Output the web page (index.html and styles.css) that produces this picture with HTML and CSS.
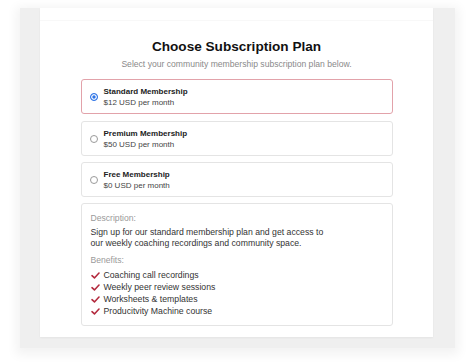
FILE: index.html
```html
<!DOCTYPE html>
<html>
<head>
<meta charset="utf-8">
<link rel="stylesheet" href="styles.css">
</head>
<body>
<div class="stage">
  <div class="frame">
    <div class="card">
      <div class="topbar"></div>
      <div class="content">
        <h1 class="title">Choose Subscription Plan</h1>
        <p class="subtitle">Select your community membership subscription plan below.</p>
        <div class="plans">
          <div class="plan selected">
            <span class="radio on"></span>
            <div class="plan-text">
              <div class="plan-name">Standard Membership</div>
              <div class="plan-price">$12 USD per month</div>
            </div>
          </div>
          <div class="plan">
            <span class="radio"></span>
            <div class="plan-text">
              <div class="plan-name">Premium Membership</div>
              <div class="plan-price">$50 USD per month</div>
            </div>
          </div>
          <div class="plan">
            <span class="radio"></span>
            <div class="plan-text">
              <div class="plan-name">Free Membership</div>
              <div class="plan-price">$0 USD per month</div>
            </div>
          </div>
          <div class="details">
            <div class="label">Description:</div>
            <p class="desc">Sign up for our standard membership plan and get access to<br>our weekly coaching recordings and community space.</p>
            <div class="label benefits-label">Benefits:</div>
            <ul class="benefits">
              <li><svg class="check" viewBox="0 0 10 8"><path d="M1 4.2 L3.8 6.8 L9 1.2"/></svg>Coaching call recordings</li>
              <li><svg class="check" viewBox="0 0 10 8"><path d="M1 4.2 L3.8 6.8 L9 1.2"/></svg>Weekly peer review sessions</li>
              <li><svg class="check" viewBox="0 0 10 8"><path d="M1 4.2 L3.8 6.8 L9 1.2"/></svg>Worksheets &amp; templates</li>
              <li><svg class="check" viewBox="0 0 10 8"><path d="M1 4.2 L3.8 6.8 L9 1.2"/></svg>Producitvity Machine course</li>
            </ul>
          </div>
        </div>
      </div>
    </div>
  </div>
</div>
</body>
</html>
```

FILE: styles.css
```css
html, body {
  margin: 0;
  padding: 0;
  background: #ffffff;
}
body {
  font-family: "Liberation Sans", Arial, sans-serif;
  width: 474px;
  height: 364px;
  overflow: hidden;
}
.stage {
  padding: 8px 19px 0 20px;
  height: 356px;
}
.frame {
  width: 435px;
  box-sizing: border-box;
  padding: 0 22px 11px 20px;
  background: #efefef;
  box-shadow: 0 3px 10px 4px #f3f3f3;
}
.card {
  width: 393px;
  height: 329px;
  background: #ffffff;
  box-shadow: 0 1px 2px rgba(0, 0, 0, 0.05);
  display: flex;
  flex-direction: column;
}
.topbar {
  height: 12px;
  border-bottom: 1px solid #f8f8f8;
  flex: none;
}
.content {
  display: flex;
  flex-direction: column;
  align-items: center;
}
.title {
  margin: 17px 0 0;
  font-size: 13.6px;
  line-height: 18px;
  font-weight: bold;
  color: #111111;
}
.subtitle {
  margin: 3px 0 0;
  font-size: 8.6px;
  line-height: 11px;
  color: #8a8a8a;
}
.plans {
  width: 312px;
  margin-top: 9px;
  display: flex;
  flex-direction: column;
  gap: 6px;
}
.plan {
  box-sizing: border-box;
  height: 35px;
  border: 1px solid #e4e4e4;
  border-radius: 3px;
  display: flex;
  align-items: center;
  padding: 0 8px 0 8px;
  gap: 6px;
}
.plan.selected {
  border-color: #e2a2aa;
  margin-bottom: 1px;
}
.radio {
  box-sizing: border-box;
  width: 8px;
  height: 8px;
  border-radius: 50%;
  border: 1px solid #9a9a9a;
  background: #ffffff;
  flex: none;
  margin-top: 1px;
}
.radio.on {
  border: 1px solid #2f74e6;
  background: #2f74e6;
  box-shadow: inset 0 0 0 1.3px #ffffff;
}
.plan-text {
  display: flex;
  flex-direction: column;
}
.plan-name {
  font-size: 8px;
  line-height: 11px;
  font-weight: bold;
  color: #222222;
}
.plan-price {
  font-size: 8px;
  line-height: 11px;
  color: #444444;
}
.details {
  box-sizing: border-box;
  border: 1px solid #e4e4e4;
  border-radius: 3px;
  padding: 8px 9px 7px;
  height: 123px;
}
.label {
  font-size: 8.6px;
  line-height: 12px;
  color: #9a9a9a;
}
.desc {
  margin: 3px 0 0;
  font-size: 8.7px;
  line-height: 10.5px;
  color: #333333;
}
.benefits-label {
  margin-top: 6px;
}
.benefits {
  list-style: none;
  margin: 3px 0 0;
  padding: 0;
}
.benefits li {
  display: flex;
  align-items: center;
  gap: 4px;
  font-size: 8.7px;
  line-height: 12px;
  color: #333333;
}
.check {
  width: 9px;
  height: 7px;
  flex: none;
  fill: none;
  stroke: #b3293d;
  stroke-width: 1.8;
  stroke-linecap: round;
  stroke-linejoin: round;
}
```
